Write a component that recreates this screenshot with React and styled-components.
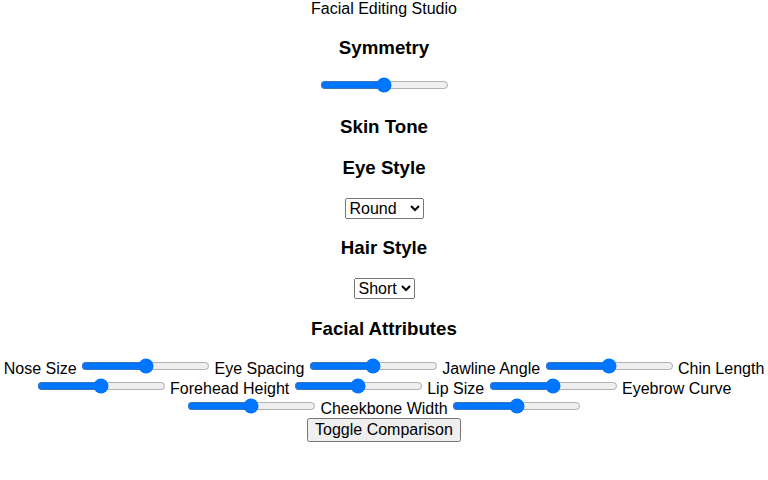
import React from "react";
import styled, { createGlobalStyle } from "styled-components";

const Global = createGlobalStyle`
  body {
    margin: 0;
    font-family: "Liberation Sans", Arial, sans-serif;
    font-size: 16px;
    color: #000;
    background: #fff;
  }
  button, select, input {
    font-family: inherit;
    font-size: 16px;
  }
`;

const Page = styled.div`
  text-align: center;
`;

const Title = styled.div``;

const Heading = styled.h3`
  font-size: 1.17em;
  font-weight: bold;
  margin: 1em 0;
`;

const Slider = styled.input.attrs({ type: "range" })`
  accent-color: #0075ff;
  margin: 0;
`;

const Select = styled.select``;

const Attributes = styled.div``;

const ToggleButton = styled.button``;

const attrs = [
  "Nose Size",
  "Eye Spacing",
  "Jawline Angle",
  "Chin Length",
  "Forehead Height",
  "Lip Size",
  "Eyebrow Curve",
  "Cheekbone Width",
];

export default function App() {
  return (
    <>
      <Global />
      <Page>
        <Title>Facial Editing Studio</Title>
        <Heading>Symmetry</Heading>
        <Slider min={0} max={100} defaultValue={50} />
        <Heading>Skin Tone</Heading>
        <Heading>Eye Style</Heading>
        <Select defaultValue="Round">
          <option>Round</option>
          <option>Almond</option>
          <option>Hooded</option>
        </Select>
        <Heading>Hair Style</Heading>
        <Select defaultValue="Short">
          <option>Short</option>
          <option>Long</option>
          <option>Curly</option>
        </Select>
        <Heading>Facial Attributes</Heading>
        <Attributes>
          {attrs.map((a) => (
            <label key={a}>
              {a} <Slider min={0} max={100} defaultValue={50} />{" "}
            </label>
          ))}
        </Attributes>
        <ToggleButton>Toggle Comparison</ToggleButton>
      </Page>
    </>
  );
}
